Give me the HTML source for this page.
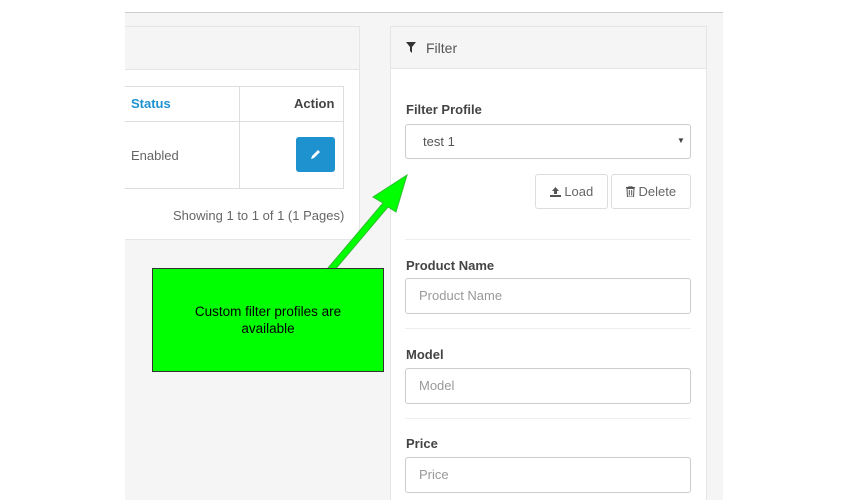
<!DOCTYPE html>
<html><head><style>
*{box-sizing:border-box;margin:0;padding:0}
html,body{width:850px;height:500px;overflow:hidden}
body{background:#fff;position:relative;font-family:"Liberation Sans",sans-serif;font-size:13px;color:#555}
.a{position:absolute}
.bg{left:125px;top:12px;width:598px;height:488px;background:#f5f5f5;border-top:1px solid #ccc}
.panel{background:#fff;border:1px solid #e5e5e5}
.ph{background:#f5f5f5;border-bottom:1px solid #e5e5e5}
.lbl{font-weight:bold;color:#444;font-size:13px}
.inp{border:1px solid #ccc;border-radius:3px;background:#fff;color:#999;padding-left:13px;line-height:34px;height:36px}
.hr{height:1px;background:#eee}
.btn{border:1px solid #ddd;border-radius:3px;background:#fff;color:#666;text-align:center;line-height:33px;height:35px}
</style></head><body>
<div class="a bg"></div>
<div class="a panel" style="left:125px;top:26px;width:235px;height:214px;border-left:none"></div>
<div class="a ph" style="left:125px;top:27px;width:234px;height:43px"></div>
<div class="a" style="left:125px;top:86px;width:219px;height:103px;border:1px solid #ddd;border-left:none"></div>
<div class="a" style="left:125px;top:121px;width:219px;height:1px;background:#ddd"></div>
<div class="a" style="left:239px;top:86px;width:1px;height:103px;background:#ddd"></div>
<div class="a" style="left:131px;top:96px;color:#1e91cf;font-weight:bold">Status</div>
<div class="a" style="left:294px;top:96px;color:#444;font-weight:bold">Action</div>
<div class="a" style="left:131px;top:148px;color:#666">Enabled</div>
<div class="a" style="left:296px;top:137px;width:39px;height:35px;background:#1e91cf;border-radius:3px"></div>
<svg class="a" style="left:309px;top:148px" width="13" height="13" viewBox="0 0 13 13"><path d="M2 11 L3 8 L9 2 L11 4 L5 10 Z" fill="#fff"/></svg>
<div class="a" style="left:173px;top:208px;color:#666">Showing 1 to 1 of 1 (1 Pages)</div>

<div class="a panel" style="left:390px;top:26px;width:317px;height:480px"></div>
<div class="a ph" style="left:391px;top:27px;width:315px;height:42px"></div>
<svg class="a" style="left:406px;top:42px" width="10" height="11" viewBox="0 0 10 11"><path d="M0 0H10L6 5V11L4 9V5Z" fill="#333"/></svg>
<div class="a" style="left:426px;top:40px;font-size:14px;color:#555">Filter</div>
<div class="a lbl" style="left:406px;top:102px">Filter Profile</div>
<div class="a inp" style="left:405px;top:124px;width:286px;height:35px;color:#555;padding-left:17px;line-height:33px">test 1</div>
<div class="a" style="left:677px;top:136px;font-size:8px;color:#444">▼</div>
<div class="a btn" style="left:535px;top:174px;width:73px"><svg width="11" height="10" viewBox="0 0 11 10" style="vertical-align:-1px"><path d="M5.5 0L9 4H7V7H4V4H2Z M0 8H11V10H0Z" fill="#555"/></svg> Load</div>
<div class="a btn" style="left:611px;top:174px;width:80px"><svg width="9" height="11" viewBox="0 0 9 11" style="vertical-align:-1px"><path d="M0 1.5H9M3 1.5V0H6V1.5M1 2.5H8L7.5 11H1.5Z M3.3 4V9.5M5.7 4V9.5" stroke="#555" fill="none" stroke-width="1"/></svg> Delete</div>
<div class="a hr" style="left:405px;top:239px;width:286px"></div>
<div class="a lbl" style="left:406px;top:258px">Product Name</div>
<div class="a inp" style="left:405px;top:278px;width:286px">Product Name</div>
<div class="a hr" style="left:405px;top:328px;width:286px"></div>
<div class="a lbl" style="left:406px;top:347px">Model</div>
<div class="a inp" style="left:405px;top:368px;width:286px">Model</div>
<div class="a hr" style="left:405px;top:418px;width:286px"></div>
<div class="a lbl" style="left:406px;top:436px">Price</div>
<div class="a inp" style="left:405px;top:457px;width:286px">Price</div>

<svg class="a" style="left:0;top:0" width="850" height="500"><path d="M328 268 L383 203 L373 197 L407 175 L396 212 L388 207 L333 272 Z" fill="#00ff00" stroke="#33bb33" stroke-width="1"/></svg>
<div class="a" style="left:152px;top:268px;width:232px;height:104px;background:#00ff00;border:1px solid #333;color:#000;font-size:13.5px;text-align:center;padding-top:34px;line-height:17px">Custom filter profiles are<br>available</div>
</body></html>
